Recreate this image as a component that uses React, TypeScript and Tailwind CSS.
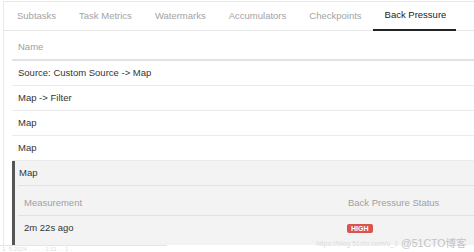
import React from "react";

const tabs = ["Subtasks", "Task Metrics", "Watermarks", "Accumulators", "Checkpoints", "Back Pressure"];
const rows = ["Source: Custom Source -> Map", "Map -> Filter", "Map", "Map"];

export default function App() {
  return (
    <div
      className="relative w-[474px] h-[252px] overflow-hidden bg-white text-[9.5px] text-[#333]"
      style={{ fontFamily: '"Liberation Sans", Arial, sans-serif' }}
    >
      <div className="pt-px">
        <div className="ml-[3px] h-[244px] border-l border-t border-[#e9e9e9]">
          {/* tabs */}
          <div className="flex h-[29px] border-b border-[#e6e6e6] pl-[1.5px]">
            {tabs.map((t) => {
              const active = t === "Back Pressure";
              return (
                <div
                  key={t}
                  className={
                    active
                      ? "-mb-px flex h-[29px] items-center border-b-2 border-[#222] pl-[11.5px] pr-[10px] text-[#222]"
                      : "-mb-px flex h-[29px] items-center px-[11.5px] text-[#a3a3a3]"
                  }
                >
                  {t}
                </div>
              );
            })}
          </div>

          {/* table */}
          <div className="ml-[8px] mt-[5px]">
            <div className="flex h-[25px] items-center border-b-2 border-[#e2e2e2] pl-[6px] text-[#a0a0a0]">
              Name
            </div>
            {rows.map((r, i) => (
              <div key={i} className="flex h-[25px] items-center border-b border-[#ebebeb] pl-[6px]">
                {r}
              </div>
            ))}

            {/* expanded row */}
            <div className="h-[84px] border-l-[3px] border-[#555] bg-[#f3f3f3]">
              <div className="ml-[3px]">
                <div className="flex h-[25px] items-center border-b border-[#e2e2e2] pl-px">Map</div>
                <div className="pt-[5px]">
                  <div className="grid h-[25px] grid-cols-[329px_1fr] items-center border-b border-[#e2e2e2] text-[#a0a0a0]">
                    <div className="pl-[6px]">Measurement</div>
                    <div className="pl-px">Back Pressure Status</div>
                  </div>
                  <div className="grid h-[25px] grid-cols-[329px_1fr] items-center">
                    <div className="pl-[6px]">2m 22s ago</div>
                    <div>
                      <span className="inline-flex h-[9px] items-center rounded-[2px] bg-[#d9534f] px-1 text-[7px] font-bold leading-none text-white">
                        HIGH
                      </span>
                    </div>
                  </div>
                </div>
              </div>
            </div>
          </div>
        </div>
      </div>

      {/* bottom strip */}
      <div className="h-[8px] bg-white">
        <div className="h-full w-[167px] border-t border-[#e4e4e4] pl-[2px] text-[6px] leading-[7px] text-[#e0e0e0]">
          1. 5.2024 . . . . : 1:11 . . 1 .
        </div>
      </div>

      {/* watermark */}
      <div className="absolute left-[316px] top-[236px] flex items-center gap-[3px]">
        <span className="text-[7px] text-[#dcdcdc]">https://blog.51cto.com/u_1</span>
        <span
          className="text-[10.5px] text-[#c4c4c4]"
          style={{ fontFamily: '"Liberation Sans", "Noto Sans CJK SC", sans-serif' }}
        >
          @51CTO博客
        </span>
      </div>
    </div>
  );
}
